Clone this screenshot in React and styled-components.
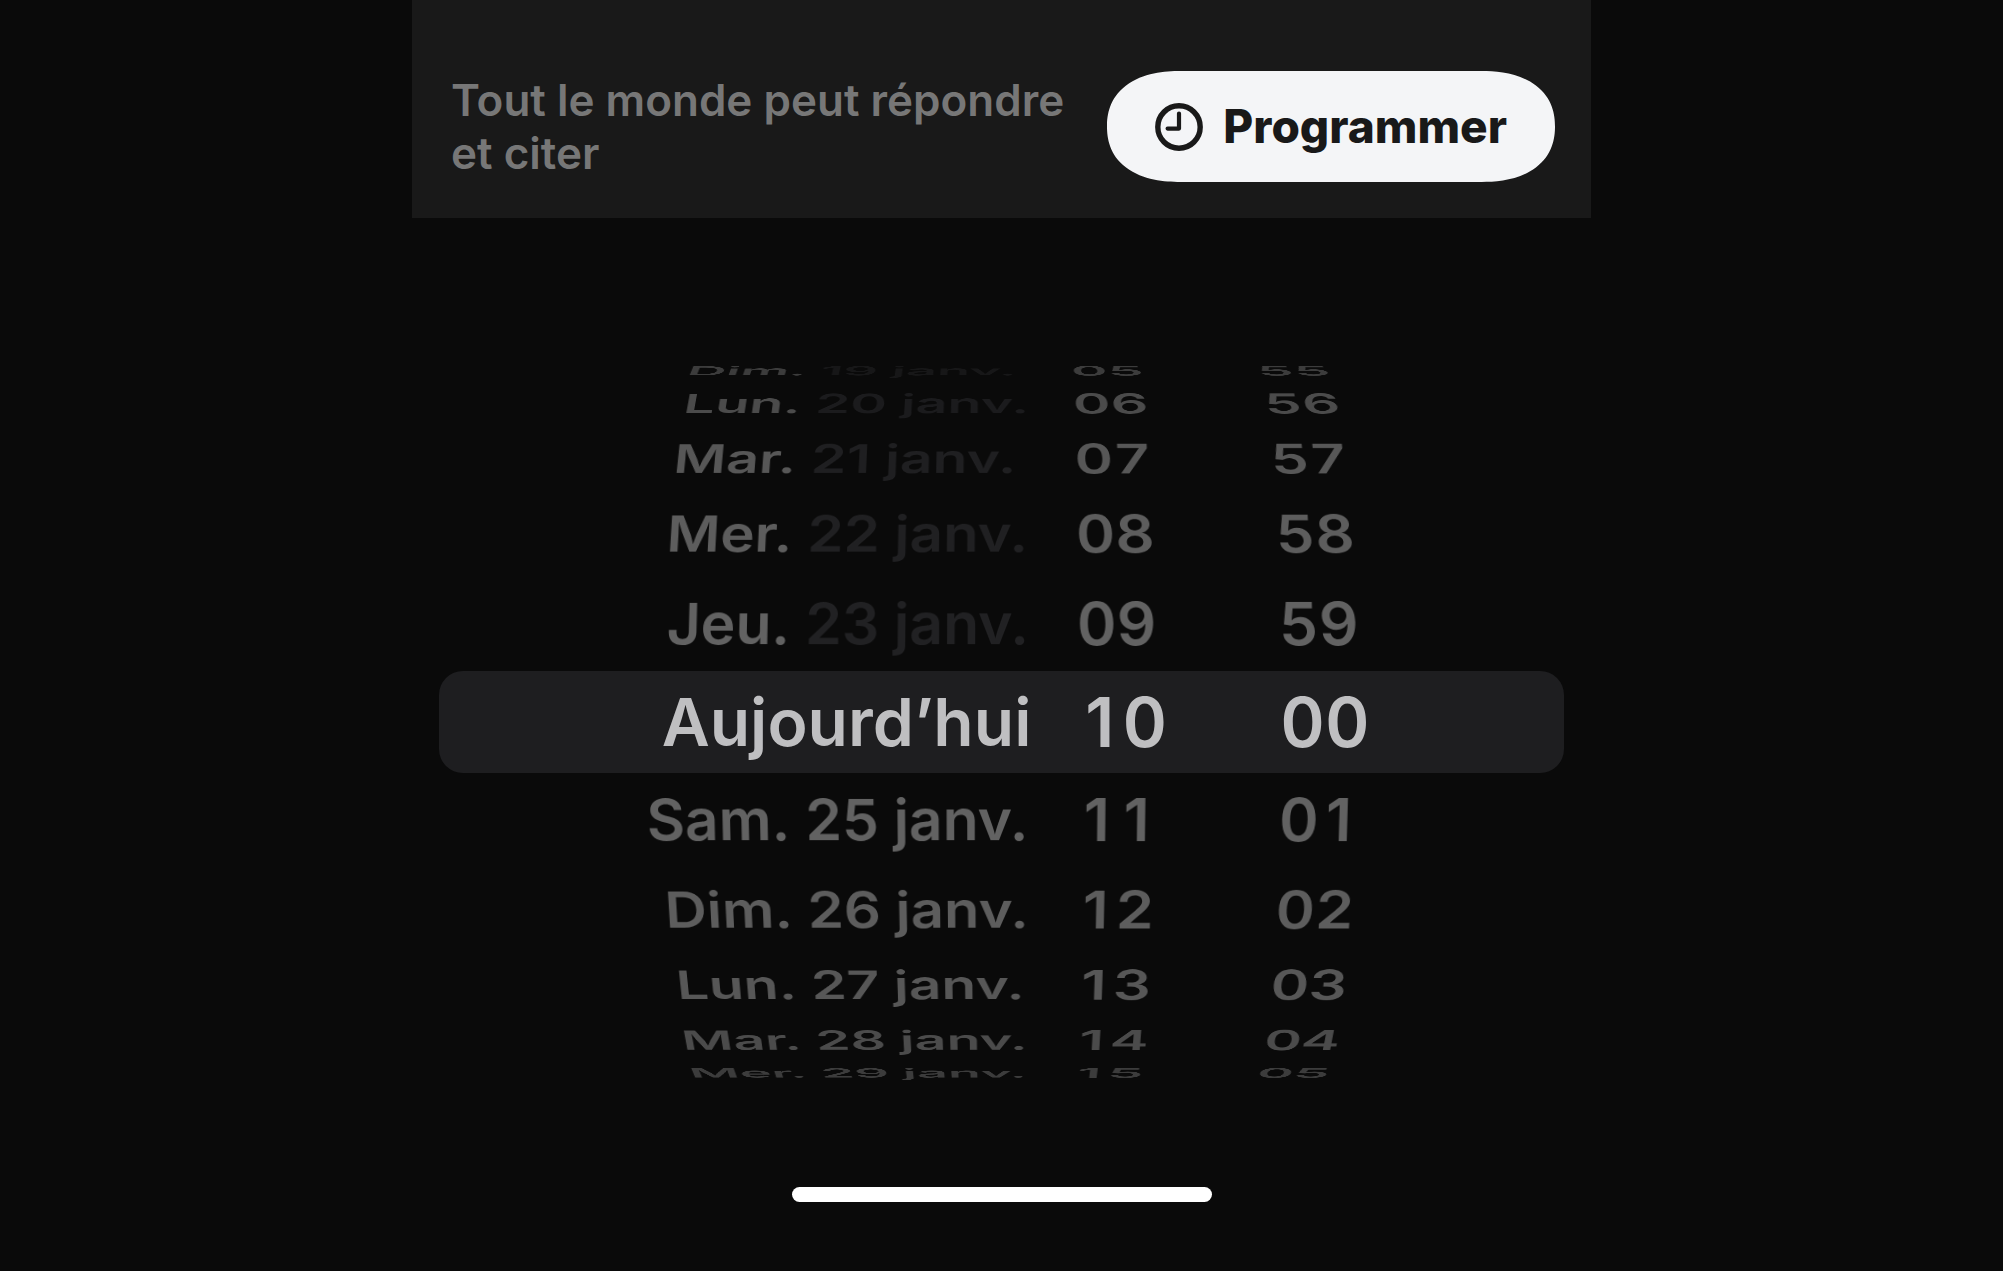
import React from "react";
import styled, { createGlobalStyle } from "styled-components";

const GlobalStyle = createGlobalStyle`
  * {
    box-sizing: border-box;
  }

  body {
    margin: 0;
    background-color: #0a0a0a;
    font-family: Inter, "Liberation Sans", sans-serif;
  }
`;

const Screen = styled.div`
  display: flex;
  flex-direction: column;
  width: 100%;
  max-width: 1179px;
  min-height: 100vh;
  margin: 0 auto;
`;

const ComposerBar = styled.header`
  display: flex;
  align-items: center;
  justify-content: space-between;
  gap: 24px;
  padding: 71px 36px 36px 39px;
  background-color: #191919;
`;

const ReplyHint = styled.p`
  margin: 0;
  color: #777777;
  font-size: 44px;
  font-weight: 600;
  line-height: 53px;
`;

const ScheduleButton = styled.button`
  display: flex;
  flex-shrink: 0;
  align-items: center;
  gap: 20px;
  padding: 29px 48px;
  border: none;
  border-radius: 60px / 56px;
  background-color: #f4f5f7;
  color: #191919;
  font-family: inherit;
  font-size: 46px;
  font-weight: 800;
  line-height: 53px;
  cursor: pointer;

  @supports (corner-shape: superellipse(1.2)) {
    border-radius: 74px / 56px;
    corner-shape: superellipse(1.2);
  }

  & svg {
    width: 48px;
    height: 48px;
  }
`;

const Picker = styled.main`
  display: grid;
  flex: 1;
  align-items: center;
  padding: 38px 27px 0;
`;

const SelectionBand = styled.div`
  grid-area: 1 / 1;
  height: 102px;
  border-radius: 24px;
  background-color: #1e1e20;
`;

const Wheels = styled.div`
  display: grid;
  grid-area: 1 / 1;
  grid-template-columns: 593fr 157fr 284fr;
  column-gap: 46px;
  perspective: 3000px;
`;

const Wheel = styled.ul`
  display: grid;
  margin: 0;
  padding: 0;
  list-style: none;
  transform: translateZ(-407px);
  transform-style: preserve-3d;
`;

const shades = ["#bfbfc1", "#626262", "#5d5d5d", "#575757", "#4b4b4b", "#3c3c3c"];
const mutedShades = ["#212123", "#212123", "#202022", "#1f1f21", "#1b1b1d", "#171718"];

// every row sits on a drum, 14 degrees from the next one
const Row = styled.li`
  grid-area: 1 / 1;
  color: ${(props) => shades[Math.abs(props.$step)]};
  font-size: ${(props) => (props.$step === 0 ? 69 : 62)}px;
  font-weight: 600;
  line-height: 72px;
  white-space: nowrap;
  transform: rotateX(${(props) => props.$step * -14}deg) translateZ(407px);
`;

const DayRow = styled(Row)`
  display: grid;
  grid-template-columns: 1fr 227px;
  column-gap: 15px;
  font-size: ${(props) => (props.$step === 0 ? 66 : 59)}px;
  text-align: right;
`;

const TimeRow = styled(Row)`
  font-variant-numeric: tabular-nums;
`;

// the tabular "1" has a foot, so the plain one is centred in a cell of the same width
const One = styled.span`
  display: inline-block;
  width: ${(props) => (props.$selected ? 45 : 40)}px;
  font-variant-numeric: normal;
  text-align: center;
`;

const Today = styled.span`
  grid-column: 1 / 3;
`;

const DayDate = styled.span`
  color: ${(props) => (props.$past ? mutedShades[Math.abs(props.$step)] : "inherit")};
  text-align: left;
`;

const Footer = styled.footer`
  display: flex;
  justify-content: center;
  padding-bottom: 69px;
`;

const HomeIndicator = styled.div`
  width: 420px;
  height: 15px;
  border-radius: 8px;
  background-color: #ffffff;
`;

const days = [
  { weekday: "Dim.", date: "19 janv." },
  { weekday: "Lun.", date: "20 janv." },
  { weekday: "Mar.", date: "21 janv." },
  { weekday: "Mer.", date: "22 janv." },
  { weekday: "Jeu.", date: "23 janv." },
  { today: "Aujourd’hui" },
  { weekday: "Sam.", date: "25 janv." },
  { weekday: "Dim.", date: "26 janv." },
  { weekday: "Lun.", date: "27 janv." },
  { weekday: "Mar.", date: "28 janv." },
  { weekday: "Mer.", date: "29 janv." },
];
const hours = ["05", "06", "07", "08", "09", "10", "11", "12", "13", "14", "15"];
const minutes = ["55", "56", "57", "58", "59", "00", "01", "02", "03", "04", "05"];

const ClockIcon = () => (
  <svg viewBox="0 0 48 48" fill="none" stroke="currentColor" aria-hidden="true">
    <circle cx="24" cy="24" r="21.2" strokeWidth="5.4" />
    <path d="M24 10.6V25.6H12.6" strokeWidth="4.2" strokeLinecap="round" strokeLinejoin="round" />
  </svg>
);

const TimeValue = ({ value, selected }) => {
  if (!value.includes("1")) {
    return value;
  }
  return value.split("").map((digit, index) =>
    digit === "1" ? (
      <One key={index} $selected={selected}>
        1
      </One>
    ) : (
      digit
    )
  );
};

const TimeWheel = ({ label, values }) => (
  <Wheel role="listbox" aria-label={label}>
    {values.map((value, index) => (
      <TimeRow
        key={value}
        $step={index - 5}
        role="option"
        aria-label={value}
        aria-selected={index === 5}
      >
        <TimeValue value={value} selected={index === 5} />
      </TimeRow>
    ))}
  </Wheel>
);

const DayWheel = () => (
  <Wheel role="listbox" aria-label="Jour">
    {days.map((day, index) => {
      const step = index - 5;
      return (
        <DayRow key={index} $step={step} role="option" aria-selected={step === 0}>
          {day.today ? (
            <Today>{day.today}</Today>
          ) : (
            <>
              <span>{day.weekday}</span>
              <DayDate $step={step} $past={step < 0}>
                {day.date}
              </DayDate>
            </>
          )}
        </DayRow>
      );
    })}
  </Wheel>
);

const App = () => {
  return (
    <>
      <GlobalStyle />
      <Screen>
        <ComposerBar>
          <ReplyHint>Tout le monde peut répondre et citer</ReplyHint>
          <ScheduleButton type="button">
            <ClockIcon />
            Programmer
          </ScheduleButton>
        </ComposerBar>
        <Picker>
          <SelectionBand />
          <Wheels>
            <DayWheel />
            <TimeWheel label="Heure" values={hours} />
            <TimeWheel label="Minute" values={minutes} />
          </Wheels>
        </Picker>
        <Footer>
          <HomeIndicator />
        </Footer>
      </Screen>
    </>
  );
};

export default App;
